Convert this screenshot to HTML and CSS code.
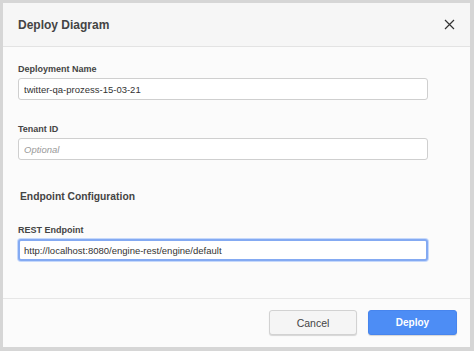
FILE: index.html
```html
<!DOCTYPE html>
<html lang="en">
  <head>
    <meta charset="UTF-8" />
    <title>Deploy Diagram</title>
    <link rel="stylesheet" href="styles.css">
  </head>
  <body>
    <div class="dialog">
      <div class="dialog-header">
        <h2>Deploy Diagram</h2>
        <button class="close" aria-label="Close">
          <svg width="11" height="11" viewBox="0 0 11 11">
            <path d="M1 1 L10 10 M10 1 L1 10" stroke="#333" stroke-width="1.2" fill="none" />
          </svg>
        </button>
      </div>

      <div class="dialog-body">
        <label for="deployName">Deployment Name</label>
        <input type="text" id="deployName" value="twitter-qa-prozess-15-03-21" />

        <label for="tenantId" class="spaced">Tenant ID</label>
        <input type="text" id="tenantId" placeholder="Optional" />

        <h3>Endpoint Configuration</h3>

        <label for="restEndpoint">REST Endpoint</label>
        <input type="text" id="restEndpoint" class="focused" value="http://localhost:8080/engine-rest/engine/default" />
      </div>

      <div class="dialog-footer">
        <button class="btn">Cancel</button>
        <button class="btn btn-primary">Deploy</button>
      </div>
    </div>
  </body>
</html>
```

FILE: styles.css
```css
* {
  box-sizing: border-box;
}
body {
  margin: 0;
  padding: 3px 4px 4px 3px;
  height: 351px;
  background: #d6d6d6;
  font-family: "Liberation Sans", Arial, sans-serif;
  color: #333;
}

.dialog {
  height: 344px;
  background: #fbfbfb;
  display: flex;
  flex-direction: column;
}

.dialog-header {
  height: 44px;
  background: #f6f6f6;
  border-bottom: 1px solid #e3e3e3;
  display: flex;
  align-items: center;
  justify-content: space-between;
  padding: 0 14px 0 15px;
}

h2 {
  margin: 0;
  font-size: 12px;
  font-weight: bold;
  color: #444;
}

.close {
  border: none;
  background: none;
  padding: 0;
  width: 12px;
  height: 12px;
  display: flex;
  cursor: pointer;
}

.dialog-body {
  flex: 1;
  padding: 15px 15px 0;
  display: flex;
  flex-direction: column;
  align-items: flex-start;
}

label {
  font-size: 9px;
  font-weight: bold;
  line-height: 14px;
  color: #444;
  margin-bottom: 2px;
}
label.spaced {
  margin-top: 22px;
}

input {
  width: 410px;
  height: 22px;
  padding: 0 5px;
  border: 1px solid #cfcfcf;
  border-radius: 3px;
  background: white;
  font-size: 9.5px;
  font-family: inherit;
  color: #333;
}
input::placeholder {
  color: #999;
  font-style: italic;
}
input.focused {
  border: 2px solid #84aaf2;
  box-shadow: 0 0 0 1px #c5d8fb;
  padding: 0 4px;
}

h3 {
  margin: 29px 0 0 2px;
  font-size: 10.3px;
  font-weight: bold;
  line-height: 16px;
  color: #444;
}
h3 + label {
  margin-top: 18px;
}

.dialog-footer {
  height: 49px;
  border-top: 1px solid #e6e6e6;
  display: flex;
  justify-content: flex-end;
  align-items: center;
  gap: 11px;
  padding: 0 13px 1px;
}

.btn {
  width: 88px;
  height: 25px;
  border: 1px solid #d2d2d2;
  border-radius: 3px;
  background: #f5f5f5;
  box-shadow: 0 1px 1px rgba(0, 0, 0, 0.15);
  font-size: 10.5px;
  font-family: inherit;
  color: #444;
  cursor: pointer;
}
.btn-primary {
  width: 89px;
  background: #4d8df5;
  border-color: #4785ee;
  color: white;
  font-size: 10px;
  font-weight: bold;
}
```
